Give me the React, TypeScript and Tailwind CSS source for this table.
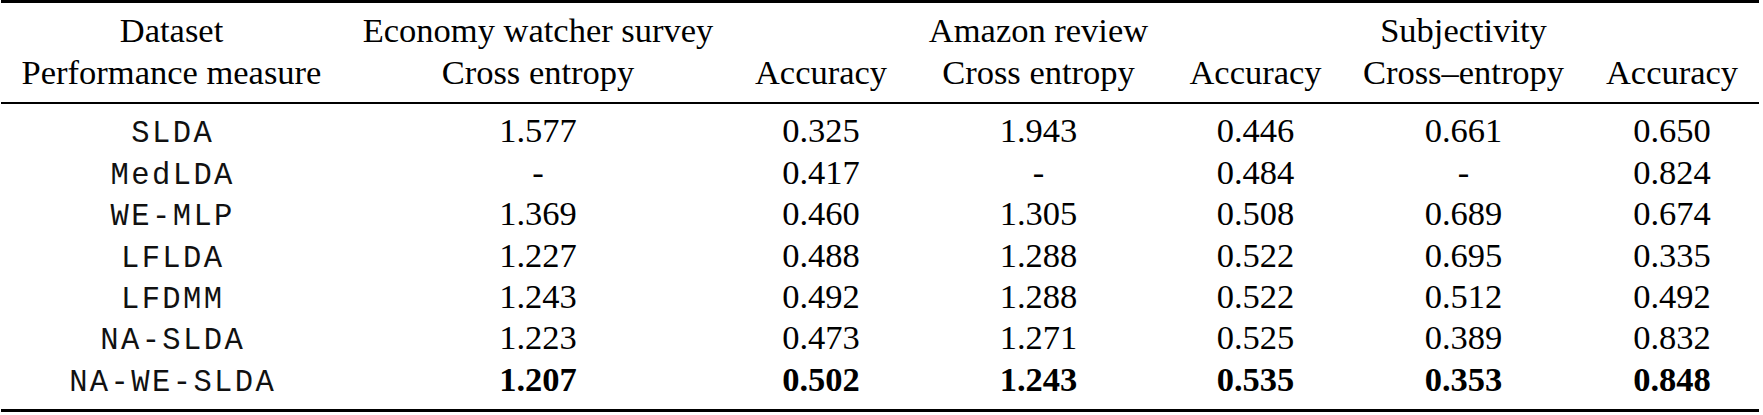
import React from "react";

const colW = [
  "w-[341px]",
  "w-[392px]",
  "w-[174px]",
  "w-[261px]",
  "w-[173px]",
  "w-[243px]",
  "w-[174px]",
];

const header: [string, string][] = [
  ["Dataset", "Performance measure"],
  ["Economy watcher survey", "Cross entropy"],
  ["", "Accuracy"],
  ["Amazon review", "Cross entropy"],
  ["", "Accuracy"],
  ["Subjectivity", "Cross\u2013entropy"],
  ["", "Accuracy"],
];

const rows: { name: string; vals: string[]; bold?: boolean }[] = [
  { name: "SLDA", vals: ["1.577", "0.325", "1.943", "0.446", "0.661", "0.650"] },
  { name: "MedLDA", vals: ["-", "0.417", "-", "0.484", "-", "0.824"] },
  { name: "WE-MLP", vals: ["1.369", "0.460", "1.305", "0.508", "0.689", "0.674"] },
  { name: "LFLDA", vals: ["1.227", "0.488", "1.288", "0.522", "0.695", "0.335"] },
  { name: "LFDMM", vals: ["1.243", "0.492", "1.288", "0.522", "0.512", "0.492"] },
  { name: "NA-SLDA", vals: ["1.223", "0.473", "1.271", "0.525", "0.389", "0.832"] },
  { name: "NA-WE-SLDA", vals: ["1.207", "0.502", "1.243", "0.535", "0.353", "0.848"], bold: true },
];

export default function App() {
  return (
    <div className="w-[1763px] h-[415px] bg-white overflow-hidden text-black">
      <div
        className="ml-[1px] w-[1758px] text-[34.5px] leading-[41.4px]"
        style={{ fontFamily: '"Liberation Serif", "Times New Roman", serif' }}
      >
        <div className="h-[2.8px] bg-black" />
        <div className="flex pt-[7.6px]">
          {header.map((h, i) => (
            <div key={i} className={`${colW[i]} flex flex-col items-center shrink-0`}>
              <div className="h-[41.4px] whitespace-nowrap">{h[0]}</div>
              <div className="h-[41.4px] whitespace-nowrap">{h[1]}</div>
            </div>
          ))}
        </div>
        <div className="mt-[9.2px] h-[1.8px] bg-black" />
        <div className="pt-[6.3px]">
          {rows.map((r) => (
            <div key={r.name} className={`flex items-baseline h-[41.4px] ${r.bold ? "font-bold" : ""}`}>
              <div
                className={`${colW[0]} shrink-0 text-center font-normal text-[30.5px] leading-[34px] tracking-[2.4px] pl-[2.4px] whitespace-nowrap text-[#111]`}
                style={{ fontFamily: '"Liberation Mono", "Courier New", monospace' }}
              >
                {r.name}
              </div>
              {r.vals.map((v, j) => (
                <div key={j} className={`${colW[j + 1]} shrink-0 text-center whitespace-nowrap`}>
                  {v}
                </div>
              ))}
            </div>
          ))}
        </div>
        <div className="mt-[9.2px] h-[2.8px] bg-black" />
      </div>
    </div>
  );
}
